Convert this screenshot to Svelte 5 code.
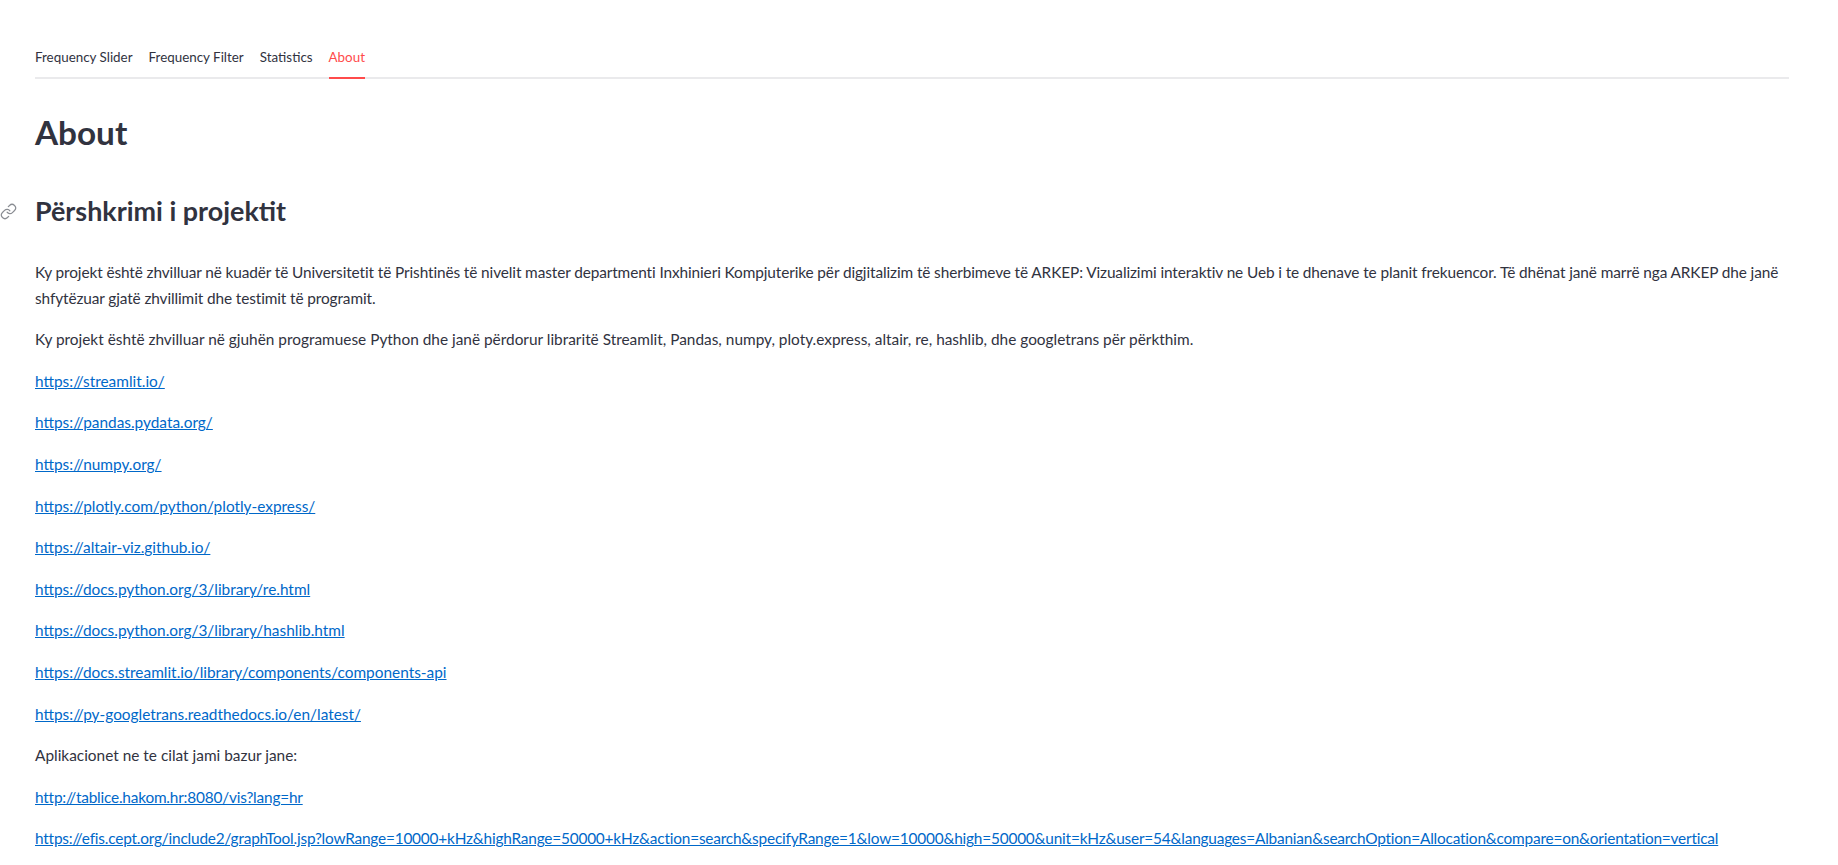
<script>
  const tabs = ['Frequency Slider', 'Frequency Filter', 'Statistics', 'About'];
  const active = 'About';

  const libs = [
    'https://streamlit.io/',
    'https://pandas.pydata.org/',
    'https://numpy.org/',
    'https://plotly.com/python/plotly-express/',
    'https://altair-viz.github.io/',
    'https://docs.python.org/3/library/re.html',
    'https://docs.python.org/3/library/hashlib.html',
    'https://docs.streamlit.io/library/components/components-api',
    'https://py-googletrans.readthedocs.io/en/latest/'
  ];

  const apps = [
    'http://tablice.hakom.hr:8080/vis?lang=hr',
    'https://efis.cept.org/include2/graphTool.jsp?lowRange=10000+kHz&highRange=50000+kHz&action=search&specifyRange=1&low=10000&high=50000&unit=kHz&user=54&languages=Albanian&searchOption=Allocation&compare=on&orientation=vertical'
  ];
</script>

<main class="page">
  <div class="tabs">
    {#each tabs as tab}
      <button class="tab" class:active={tab === active}>{tab}</button>
    {/each}
  </div>

  <h1>About</h1>

  <h2>
    <svg class="anchor" viewBox="0 0 24 24" fill="none" stroke="#8a8d93" stroke-width="1.7" stroke-linecap="round" stroke-linejoin="round">
      <path d="M10 13a5 5 0 0 0 7.54.54l3-3a5 5 0 0 0-7.07-7.07l-1.72 1.71" />
      <path d="M14 11a5 5 0 0 0-7.54-.54l-3 3a5 5 0 0 0 7.07 7.07l1.71-1.71" />
    </svg>
    Përshkrimi i projektit
  </h2>

  <p class="intro">Ky projekt është zhvilluar në kuadër të Universitetit të Prishtinës të nivelit master departmenti Inxhinieri Kompjuterike për digjitalizim të sherbimeve të ARKEP: Vizualizimi interaktiv ne Ueb i te dhenave te planit frekuencor. Të dhënat janë marrë nga ARKEP dhe janë shfytëzuar gjatë zhvillimit dhe testimit të programit.</p>

  <p>Ky projekt është zhvilluar në gjuhën programuese Python dhe janë përdorur libraritë Streamlit, Pandas, numpy, ploty.express, altair, re, hashlib, dhe googletrans për përkthim.</p>

  {#each libs as link}
    <p><a href={link}>{link}</a></p>
  {/each}

  <p>Aplikacionet ne te cilat jami bazur jane:</p>

  {#each apps as link}
    <p class="app-link"><a href={link}>{link}</a></p>
  {/each}
</main>

<style>
  :global(body) {
    margin: 0;
    background: #fff;
    overflow: hidden;
  }

  .page {
    height: 865px;
    overflow: hidden;
    box-sizing: border-box;
    padding: 38px 49px 0 35px;
    font-family: "Lato", sans-serif;
    color: #31333f;
  }

  .tabs {
    display: flex;
    gap: 16px;
    border-bottom: 2px solid #eaeaec;
  }

  .tab {
    padding: 0 0 2px;
    height: 41px;
    margin-bottom: -2px;
    border: none;
    border-bottom: 2px solid transparent;
    background: none;
    font: inherit;
    font-size: 13.4px;
    color: inherit;
  }

  .tab.active {
    color: #ff4b4b;
    border-bottom-color: #ff4b4b;
  }

  h1 {
    margin: 0;
    padding: 31px 0 38px;
    font-size: 33.3px;
    line-height: 44px;
    font-weight: 700;
  }

  h2 {
    position: relative;
    margin: 0;
    padding: 0 0 30px;
    font-size: 26.9px;
    line-height: 38px;
    font-weight: 700;
  }

  .anchor {
    position: absolute;
    left: -35px;
    top: 11px;
    width: 17px;
    height: 17px;
  }

  p {
    margin: 0 0 16px;
    font-size: 15.4px;
    line-height: 25.6px;
  }

  .intro {
    letter-spacing: -0.11px;
  }

  .app-link {
    letter-spacing: -0.2px;
  }

  a {
    color: #0068c9;
  }
</style>
